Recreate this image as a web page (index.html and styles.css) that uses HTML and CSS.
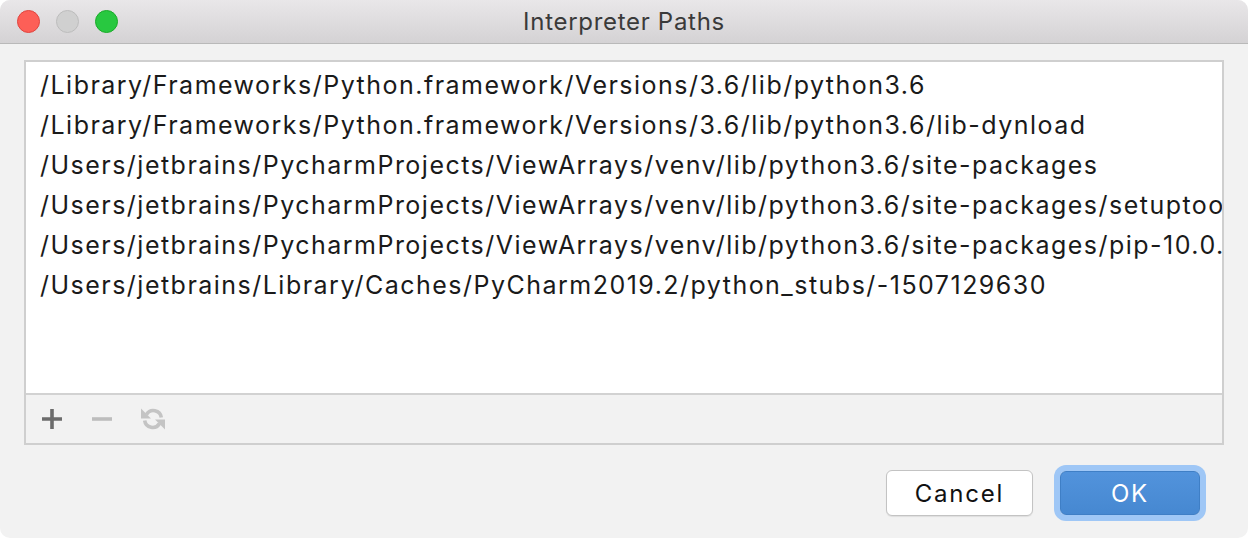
FILE: index.html
```html
<!DOCTYPE html>
<html lang="en">
<head>
    <meta charset="UTF-8">
    <meta name="viewport" content="width=device-width, initial-scale=1.0">
    <title>Interpreter Paths</title>
    <link rel="stylesheet" href="styles.css">
</head>
<body>
    <div class="window">
        <div class="titlebar">
            <div class="lights">
                <span class="light close"></span>
                <span class="light min"></span>
                <span class="light zoom"></span>
            </div>
            <div class="title">Interpreter Paths</div>
        </div>

        <div class="content">
            <div class="paths">
                <ul class="path-list">
                    <li>/Library/Frameworks/Python.framework/Versions/3.6/lib/python3.6</li>
                    <li>/Library/Frameworks/Python.framework/Versions/3.6/lib/python3.6/lib-dynload</li>
                    <li>/Users/jetbrains/PycharmProjects/ViewArrays/venv/lib/python3.6/site-packages</li>
                    <li>/Users/jetbrains/PycharmProjects/ViewArrays/venv/lib/python3.6/site-packages/setuptools-39.1.0-py3.6.egg</li>
                    <li>/Users/jetbrains/PycharmProjects/ViewArrays/venv/lib/python3.6/site-packages/pip-10.0.1-py3.6.egg</li>
                    <li>/Users/jetbrains/Library/Caches/PyCharm2019.2/python_stubs/-1507129630</li>
                </ul>
                <div class="toolbar">
                    <!-- add -->
                    <svg class="tool" width="24" height="24" viewBox="0 0 24 24">
                        <path d="M12 2v20M2 12h20" stroke="#6c6c6c" stroke-width="3.6" fill="none"/>
                    </svg>
                    <!-- remove (disabled) -->
                    <svg class="tool" width="24" height="24" viewBox="0 0 24 24">
                        <path d="M2 12h20" stroke="#bdbdbd" stroke-width="3.6" fill="none"/>
                    </svg>
                    <!-- reload (disabled) -->
                    <svg class="tool" width="26" height="26" viewBox="0 0 26 26">
                        <path d="M6.5 8.5A8 8 0 0 1 21.3 11.5" stroke="#c4c4c4" stroke-width="3.6" fill="none"/>
                        <path d="M1 2.5v10h10z" fill="#c4c4c4"/>
                        <path d="M19.5 17.5A8 8 0 0 1 4.7 14.5" stroke="#c4c4c4" stroke-width="3.6" fill="none"/>
                        <path d="M25 23.5v-10h-10z" fill="#c4c4c4"/>
                    </svg>
                </div>
            </div>
        </div>

        <div class="footer">
            <button class="btn">Cancel</button>
            <button class="btn primary">OK</button>
        </div>
    </div>
</body>
</html>
```

FILE: styles.css
```css
body {
    margin: 0;
    background: #fff;
    font-family: "Inter", "Noto Sans", sans-serif;
}
.window {
    width: 1248px;
    height: 538px;
    border-radius: 10px;
    background: #f2f2f2;
    overflow: hidden;
    display: flex;
    flex-direction: column;
}
.titlebar {
    height: 43px;
    border-bottom: 1px solid #b9b9b9;
    background: linear-gradient(#e9e7e9, #d4d2d4);
    display: flex;
    align-items: center;
    position: relative;
}
.lights {
    display: flex;
    gap: 16px;
    padding-left: 17px;
}
.light {
    width: 23px;
    height: 23px;
    border-radius: 50%;
    box-sizing: border-box;
}
.light.close {
    background: #fd5f57;
    border: 1px solid #e0443e;
}
.light.min {
    background: #d0d0d0;
    border: 1px solid #bcbcbc;
}
.light.zoom {
    background: #28c840;
    border: 1px solid #1aab29;
}
.title {
    position: absolute;
    left: 0;
    right: 0;
    text-align: center;
    font-size: 24px;
    letter-spacing: 0.7px;
    color: #3a3a3a;
}
.content {
    padding: 16px 24px 0 24px;
}
.paths {
    height: 381px;
    border: 2px solid #cfcfcf;
    display: flex;
    flex-direction: column;
}
.path-list {
    flex: 1;
    margin: 0;
    padding: 3px 0 0 14px;
    list-style: none;
    background: #fff;
    overflow: hidden;
}
.path-list li {
    height: 40px;
    line-height: 40px;
    font-size: 25px;
    letter-spacing: 1.48px;
    color: #1a1a1a;
    white-space: nowrap;
}
.toolbar {
    height: 48px;
    border-top: 2px solid #d2d2d2;
    background: #f2f2f2;
    display: flex;
    align-items: center;
    gap: 26px;
    padding-left: 14px;
}
.footer {
    display: flex;
    justify-content: flex-end;
    align-items: center;
    gap: 27px;
    padding: 25px 48px 0 0;
}
.btn {
    height: 46px;
    width: 147px;
    border: 1px solid #c3c3c3;
    border-radius: 6px;
    background: #fff;
    font-family: inherit;
    font-size: 24px;
    letter-spacing: 1.8px;
    color: #111;
    box-shadow: 0 1px 1px rgba(0, 0, 0, 0.08);
}
.btn.primary {
    width: 140px;
    height: 44px;
    border: 1px solid #3f7fc6;
    background: linear-gradient(#5293dc, #4688d1);
    color: #fff;
    box-shadow: 0 0 0 6px #9fc7f6;
}
```
